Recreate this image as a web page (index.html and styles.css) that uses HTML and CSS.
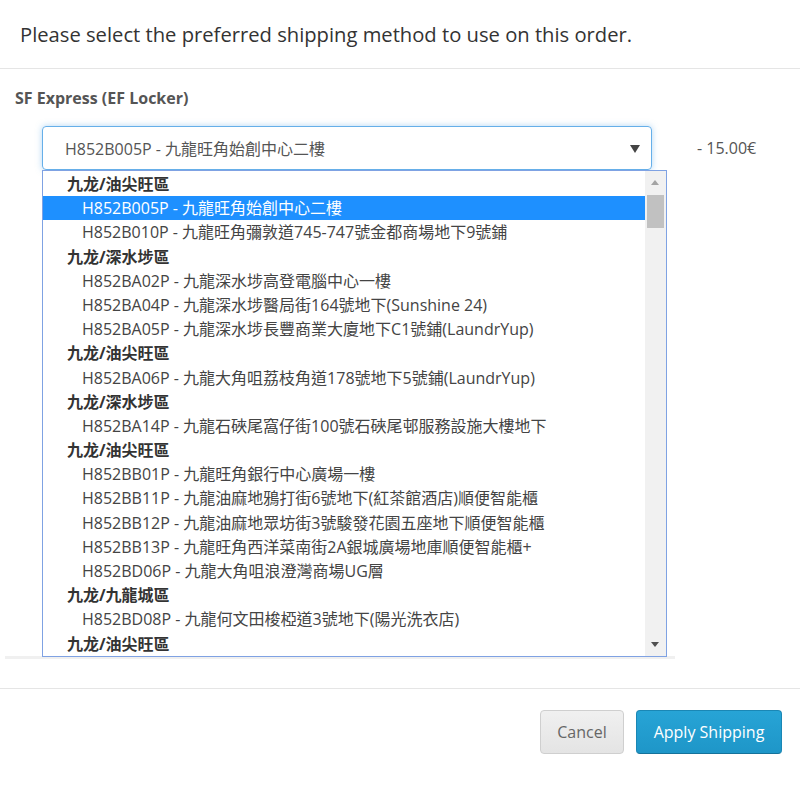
FILE: index.html
```html
<!DOCTYPE html>
<html>
<head>
<meta charset="utf-8">
<link rel="stylesheet" href="styles.css">
</head>
<body>
<div class="modal">
  <div class="modal-header">
    <p class="title">Please select the preferred shipping method to use on this order.</p>
  </div>
  <div class="modal-body">
    <div class="method-label">SF Express (EF Locker)</div>
    <div class="method-row">
      <div class="select-wrap">
        <div class="select">
          <span class="select-text">H852B005P - 九龍旺角始創中心二樓</span>
          <span class="caret"></span>
        </div>
        <div class="dropdown">
          <div class="options">
            <div class="group">九龙/油尖旺區</div>
            <div class="opt selected">H852B005P - 九龍旺角始創中心二樓</div>
            <div class="opt">H852B010P - 九龍旺角彌敦道745-747號金都商場地下9號鋪</div>
            <div class="group">九龙/深水埗區</div>
            <div class="opt">H852BA02P - 九龍深水埗高登電腦中心一樓</div>
            <div class="opt">H852BA04P - 九龍深水埗醫局街164號地下(Sunshine 24)</div>
            <div class="opt">H852BA05P - 九龍深水埗長豐商業大廈地下C1號鋪(LaundrYup)</div>
            <div class="group">九龙/油尖旺區</div>
            <div class="opt">H852BA06P - 九龍大角咀荔枝角道178號地下5號鋪(LaundrYup)</div>
            <div class="group">九龙/深水埗區</div>
            <div class="opt">H852BA14P - 九龍石硤尾窩仔街100號石硤尾邨服務設施大樓地下</div>
            <div class="group">九龙/油尖旺區</div>
            <div class="opt">H852BB01P - 九龍旺角銀行中心廣場一樓</div>
            <div class="opt">H852BB11P - 九龍油麻地鴉打街6號地下(紅茶館酒店)順便智能櫃</div>
            <div class="opt">H852BB12P - 九龍油麻地眾坊街3號駿發花園五座地下順便智能櫃</div>
            <div class="opt">H852BB13P - 九龍旺角西洋菜南街2A銀城廣場地庫順便智能櫃+</div>
            <div class="opt">H852BD06P - 九龍大角咀浪澄灣商場UG層</div>
            <div class="group">九龙/九龍城區</div>
            <div class="opt">H852BD08P - 九龍何文田梭椏道3號地下(陽光洗衣店)</div>
            <div class="group">九龙/油尖旺區</div>
          </div>
          <div class="scrollbar">
            <span class="arrow-up"></span>
            <span class="thumb"></span>
            <span class="arrow-down"></span>
          </div>
        </div>
      </div>
      <div class="price">- 15.00€</div>
    </div>
    <div class="under-rule"></div>
  </div>
  <div class="modal-footer">
    <button class="btn btn-default">Cancel</button>
    <button class="btn btn-primary">Apply Shipping</button>
  </div>
</div>
</body>
</html>
```
FILE: styles.css
```css
* { box-sizing: border-box; }
html, body { margin: 0; padding: 0; background: #fff; }
body {
  font-family: "Open Sans", "Noto Sans CJK TC", sans-serif;
  color: #333;
  width: 800px;
  height: 800px;
  overflow: hidden;
}
.modal { display: flex; flex-direction: column; height: 800px; }
.modal-header {
  height: 69px;
  border-bottom: 1px solid #e5e5e5;
  display: flex;
  align-items: center;
  padding: 0 20px 1px;
}
.title {
  margin: 0;
  font-size: 20.2px;
  line-height: 28px;
  color: #333;
}
.modal-body {
  flex: 1;
  padding: 18px 15px 0;
  display: flex;
  flex-direction: column;
}
.method-label {
  font-size: 16px;
  font-weight: 700;
  line-height: 22px;
  color: #555;
}
.method-row {
  display: flex;
  align-items: center;
  margin-top: 17px;
  padding-left: 27px;
}
.select-wrap {
  position: relative;
  width: 610px;
}
.select {
  height: 44px;
  border: 1px solid #66afe9;
  border-radius: 4px;
  box-shadow: 0 0 6px rgba(102, 175, 233, 0.5);
  display: flex;
  align-items: center;
  justify-content: space-between;
  padding: 0 11px 0 22px;
  font-size: 16px;
  color: #555;
}
.caret {
  width: 0;
  height: 0;
  border-left: 5px solid transparent;
  border-right: 5px solid transparent;
  border-top: 8px solid #444;
  margin-top: 2px;
}
.price {
  margin-left: 45px;
  font-size: 16px;
  color: #555;
}
.dropdown {
  position: absolute;
  top: 44px;
  left: 0;
  width: 625px;
  height: 487px;
  border: 1px solid #7fa2e3;
  background: #fff;
  display: flex;
  overflow: hidden;
  z-index: 2;
}
.options {
  flex: 1;
  padding-top: 1px;
  font-size: 16px;
  overflow: hidden;
}
.group, .opt {
  height: 24.2px;
  line-height: 24.2px;
  white-space: nowrap;
}
.group {
  padding-left: 24px;
  font-weight: 700;
  color: #333;
}
.opt {
  padding-left: 39px;
  color: #444;
}
.opt.selected {
  background: #1e90ff;
  color: #fff;
}
.scrollbar {
  width: 21px;
  background: #f1f1f1;
  position: relative;
  flex: none;
}
.arrow-up {
  position: absolute;
  left: 6px;
  top: 9px;
  border-left: 4px solid transparent;
  border-right: 4px solid transparent;
  border-bottom: 5px solid #a3a3a3;
}
.arrow-down {
  position: absolute;
  left: 6px;
  bottom: 9px;
  border-left: 4px solid transparent;
  border-right: 4px solid transparent;
  border-top: 5px solid #505050;
}
.thumb {
  position: absolute;
  left: 2px;
  top: 24px;
  width: 17px;
  height: 33px;
  background: #c1c1c1;
}
.under-rule {
  margin-top: 486px;
  margin-left: -10px;
  width: 670px;
  height: 3px;
  background: #f0f0f0;
}
.modal-footer {
  height: 112px;
  border-top: 1px solid #e5e5e5;
  display: flex;
  justify-content: flex-end;
  align-items: flex-start;
  gap: 12px;
  padding: 21px 18px 0 0;
}
.btn {
  height: 44px;
  font-family: "Open Sans", sans-serif;
  font-size: 16px;
  border-radius: 4px;
  padding: 0 16px;
  cursor: pointer;
}
.btn-default {
  width: 84px;
  background: linear-gradient(#f0f0f0, #e4e4e4);
  border: 1px solid #cfcfcf;
  color: #666;
}
.btn-primary {
  width: 146px;
  background: linear-gradient(#27a4d6, #1e96c8);
  border: 1px solid #1a87b5;
  border-bottom-color: #15729a;
  color: #fff;
}
```
